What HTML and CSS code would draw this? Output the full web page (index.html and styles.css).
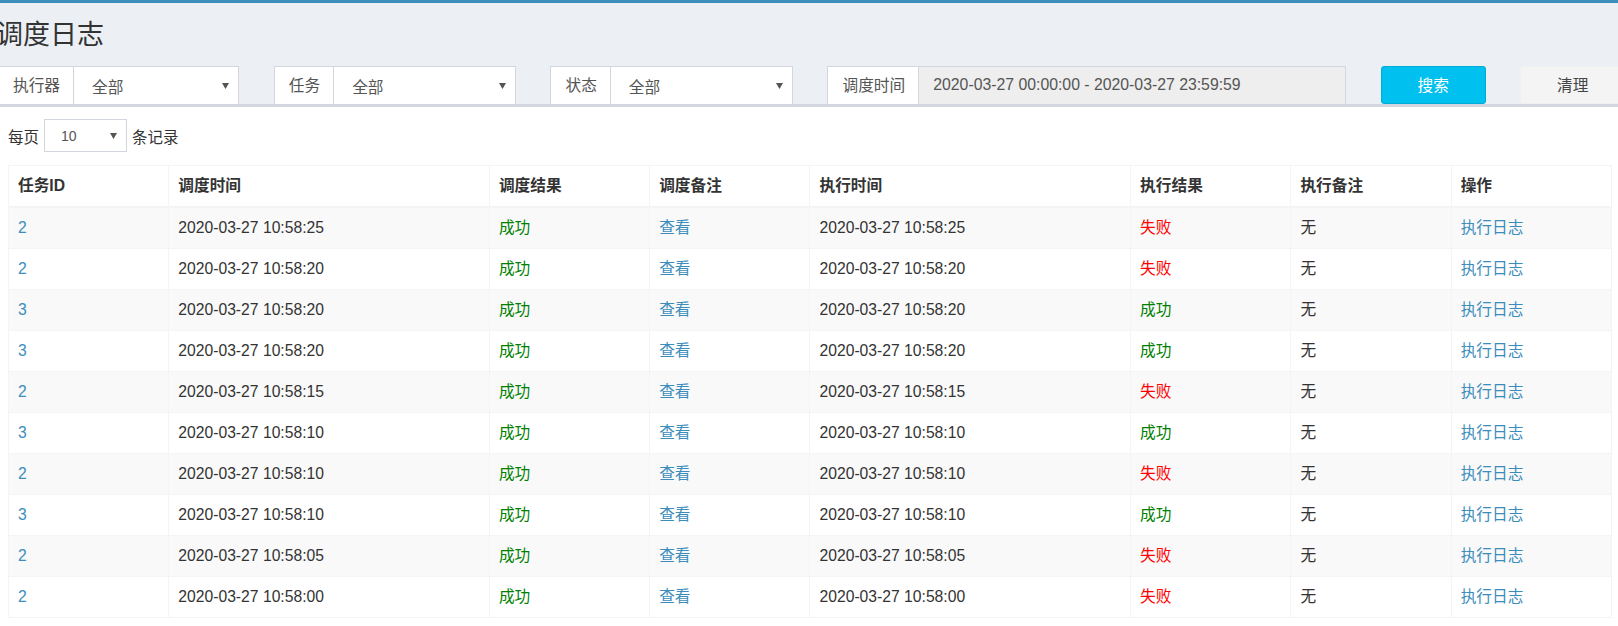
FILE: index.html
```html
<!DOCTYPE html>
<html lang="zh-CN">
<head>
<meta charset="utf-8">
<title>调度日志</title>
<link rel="stylesheet" href="styles.css">
</head>
<body>
<div class="topbar"></div>
<section class="content-header">
  <h1 class="page-title">调度日志</h1>
  <div class="filters">
    <div class="input-group g1">
      <span class="addon">执行器</span>
      <div class="select"><span class="sel-text">全部</span><svg class="caret" width="7" height="6" viewBox="0 0 7 6"><polygon points="0,0 7,0 3.5,6" fill="#555"/></svg></div>
    </div>
    <div class="input-group g2">
      <span class="addon">任务</span>
      <div class="select"><span class="sel-text">全部</span><svg class="caret" width="7" height="6" viewBox="0 0 7 6"><polygon points="0,0 7,0 3.5,6" fill="#555"/></svg></div>
    </div>
    <div class="input-group g3">
      <span class="addon">状态</span>
      <div class="select"><span class="sel-text">全部</span><svg class="caret" width="7" height="6" viewBox="0 0 7 6"><polygon points="0,0 7,0 3.5,6" fill="#555"/></svg></div>
    </div>
    <div class="input-group g4">
      <span class="addon">调度时间</span>
      <div class="date-input">2020-03-27 00:00:00 - 2020-03-27 23:59:59</div>
    </div>
    <button class="btn btn-info">搜索</button>
    <button class="btn btn-default">清理</button>
  </div>
</section>
<section class="box">
  <div class="length">
    <span>每页</span>
    <div class="select-sm"><span>10</span><svg class="caret" width="7" height="6" viewBox="0 0 7 6"><polygon points="0,0 7,0 3.5,6" fill="#555"/></svg></div>
    <span>条记录</span>
  </div>
  <table class="log-table">
    <colgroup>
      <col class="c1"><col class="c2"><col class="c1"><col class="c1"><col class="c2"><col class="c1"><col class="c1"><col class="c1">
    </colgroup>
    <thead>
      <tr><th>任务ID</th><th>调度时间</th><th>调度结果</th><th>调度备注</th><th>执行时间</th><th>执行结果</th><th>执行备注</th><th>操作</th></tr>
    </thead>
    <tbody>
      <tr><td class="link">2</td><td>2020-03-27 10:58:25</td><td class="ok">成功</td><td class="link">查看</td><td>2020-03-27 10:58:25</td><td class="fail">失败</td><td>无</td><td class="link">执行日志</td></tr>
      <tr><td class="link">2</td><td>2020-03-27 10:58:20</td><td class="ok">成功</td><td class="link">查看</td><td>2020-03-27 10:58:20</td><td class="fail">失败</td><td>无</td><td class="link">执行日志</td></tr>
      <tr><td class="link">3</td><td>2020-03-27 10:58:20</td><td class="ok">成功</td><td class="link">查看</td><td>2020-03-27 10:58:20</td><td class="ok">成功</td><td>无</td><td class="link">执行日志</td></tr>
      <tr><td class="link">3</td><td>2020-03-27 10:58:20</td><td class="ok">成功</td><td class="link">查看</td><td>2020-03-27 10:58:20</td><td class="ok">成功</td><td>无</td><td class="link">执行日志</td></tr>
      <tr><td class="link">2</td><td>2020-03-27 10:58:15</td><td class="ok">成功</td><td class="link">查看</td><td>2020-03-27 10:58:15</td><td class="fail">失败</td><td>无</td><td class="link">执行日志</td></tr>
      <tr><td class="link">3</td><td>2020-03-27 10:58:10</td><td class="ok">成功</td><td class="link">查看</td><td>2020-03-27 10:58:10</td><td class="ok">成功</td><td>无</td><td class="link">执行日志</td></tr>
      <tr><td class="link">2</td><td>2020-03-27 10:58:10</td><td class="ok">成功</td><td class="link">查看</td><td>2020-03-27 10:58:10</td><td class="fail">失败</td><td>无</td><td class="link">执行日志</td></tr>
      <tr><td class="link">3</td><td>2020-03-27 10:58:10</td><td class="ok">成功</td><td class="link">查看</td><td>2020-03-27 10:58:10</td><td class="ok">成功</td><td>无</td><td class="link">执行日志</td></tr>
      <tr><td class="link">2</td><td>2020-03-27 10:58:05</td><td class="ok">成功</td><td class="link">查看</td><td>2020-03-27 10:58:05</td><td class="fail">失败</td><td>无</td><td class="link">执行日志</td></tr>
      <tr><td class="link">2</td><td>2020-03-27 10:58:00</td><td class="ok">成功</td><td class="link">查看</td><td>2020-03-27 10:58:00</td><td class="fail">失败</td><td>无</td><td class="link">执行日志</td></tr>
    </tbody>
  </table>
</section>
</body>
</html>
```
FILE: styles.css
```css
html, body {
  margin: 0;
  padding: 0;
}
body {
  width: 1618px;
  height: 626px;
  overflow: hidden;
  background: #ecf0f5;
  font-family: "Liberation Sans", Arial, "Noto Sans CJK SC", sans-serif;
  color: #333;
  display: flex;
  flex-direction: column;
}
.topbar {
  height: 3px;
  background: #3c8dbc;
  flex: none;
}
.content-header {
  padding: 17px 0 0 0;
  flex: none;
}
.page-title {
  margin: 0 0 0 -4px;
  font-size: 27px;
  line-height: 31px;
  font-weight: normal;
  color: #333;
}
.filters {
  display: flex;
  gap: 34.5px;
  margin: 15px 0 0 -2px;
  height: 38px;
}
.input-group {
  display: flex;
  height: 38px;
  flex: none;
  box-sizing: border-box;
}
.g1 { width: 241.3px; }
.g2 { width: 242.2px; }
.g3 { width: 242.5px; }
.g4 { width: 518.7px; }
.addon {
  flex: none;
  display: flex;
  align-items: center;
  padding: 0 13px 0 14px;
  background: #fff;
  border: 1px solid #d2d6de;
  border-right: none;
  border-bottom: none;
  font-size: 15.7px;
  color: #555;
  padding-bottom: 3px;
}
.select {
  flex: 1;
  display: flex;
  align-items: center;
  justify-content: space-between;
  background: #fff;
  border: 1px solid #d2d6de;
  border-bottom: none;
  padding: 0 9px 0 18px;
  font-size: 15.7px;
  color: #555;
}
.sel-text {
  padding-top: 2px;
}
.caret {
  display: block;
  flex: none;
}
.date-input {
  flex: 1;
  display: flex;
  align-items: center;
  background: #eee;
  border: 1px solid #d2d6de;
  border-bottom: none;
  padding: 0 0 2px 14px;
  font-size: 15.8px;
  color: #555;
}
.btn {
  flex: none;
  width: 105px;
  height: 38px;
  font-family: inherit;
  font-size: 15.7px;
  border-radius: 3px;
  padding: 0 0 2px;
  margin: 0;
}
.btn-info {
  background: #00c0ef;
  border: 1px solid #00acd6;
  color: #fff;
}
.btn-default {
  background: #f4f4f4;
  border: 1px solid #f0f0f0;
  color: #444;
  border-radius: 0;
}
.box {
  flex: 1;
  background: #fff;
  border-top: 3px solid #d2d6de;
  padding: 0 6px 0 8px;
}
.length {
  display: flex;
  align-items: center;
  height: 33px;
  margin: 12px 0 13px 0;
  font-size: 15.5px;
  color: #333;
}
.select-sm {
  width: 83px;
  height: 33px;
  box-sizing: border-box;
  margin: 0 5px 0 5px;
  border: 1px solid #d2d6de;
  display: flex;
  align-items: center;
  justify-content: space-between;
  padding: 0 9px 0 16px;
  font-size: 14px;
  color: #555;
}
.log-table {
  width: 1604px;
  border-collapse: collapse;
  table-layout: fixed;
  font-size: 15.7px;
}
.c1 { width: 10%; }
.c2 { width: 20%; }
.log-table th,
.log-table td {
  border: 1px solid #f4f4f4;
  padding: 9px 9px;
  line-height: 22px;
  text-align: left;
  white-space: nowrap;
}
.log-table th {
  font-weight: bold;
  color: #333;
  border-bottom: 2px solid #f4f4f4;
  background: #fff;
}
.log-table tbody tr:nth-child(odd) {
  background: #f9f9f9;
}
.log-table td.link { color: #3c8dbc; }
.log-table td.ok { color: #008000; }
.log-table td.fail { color: #ff0000; }
```
